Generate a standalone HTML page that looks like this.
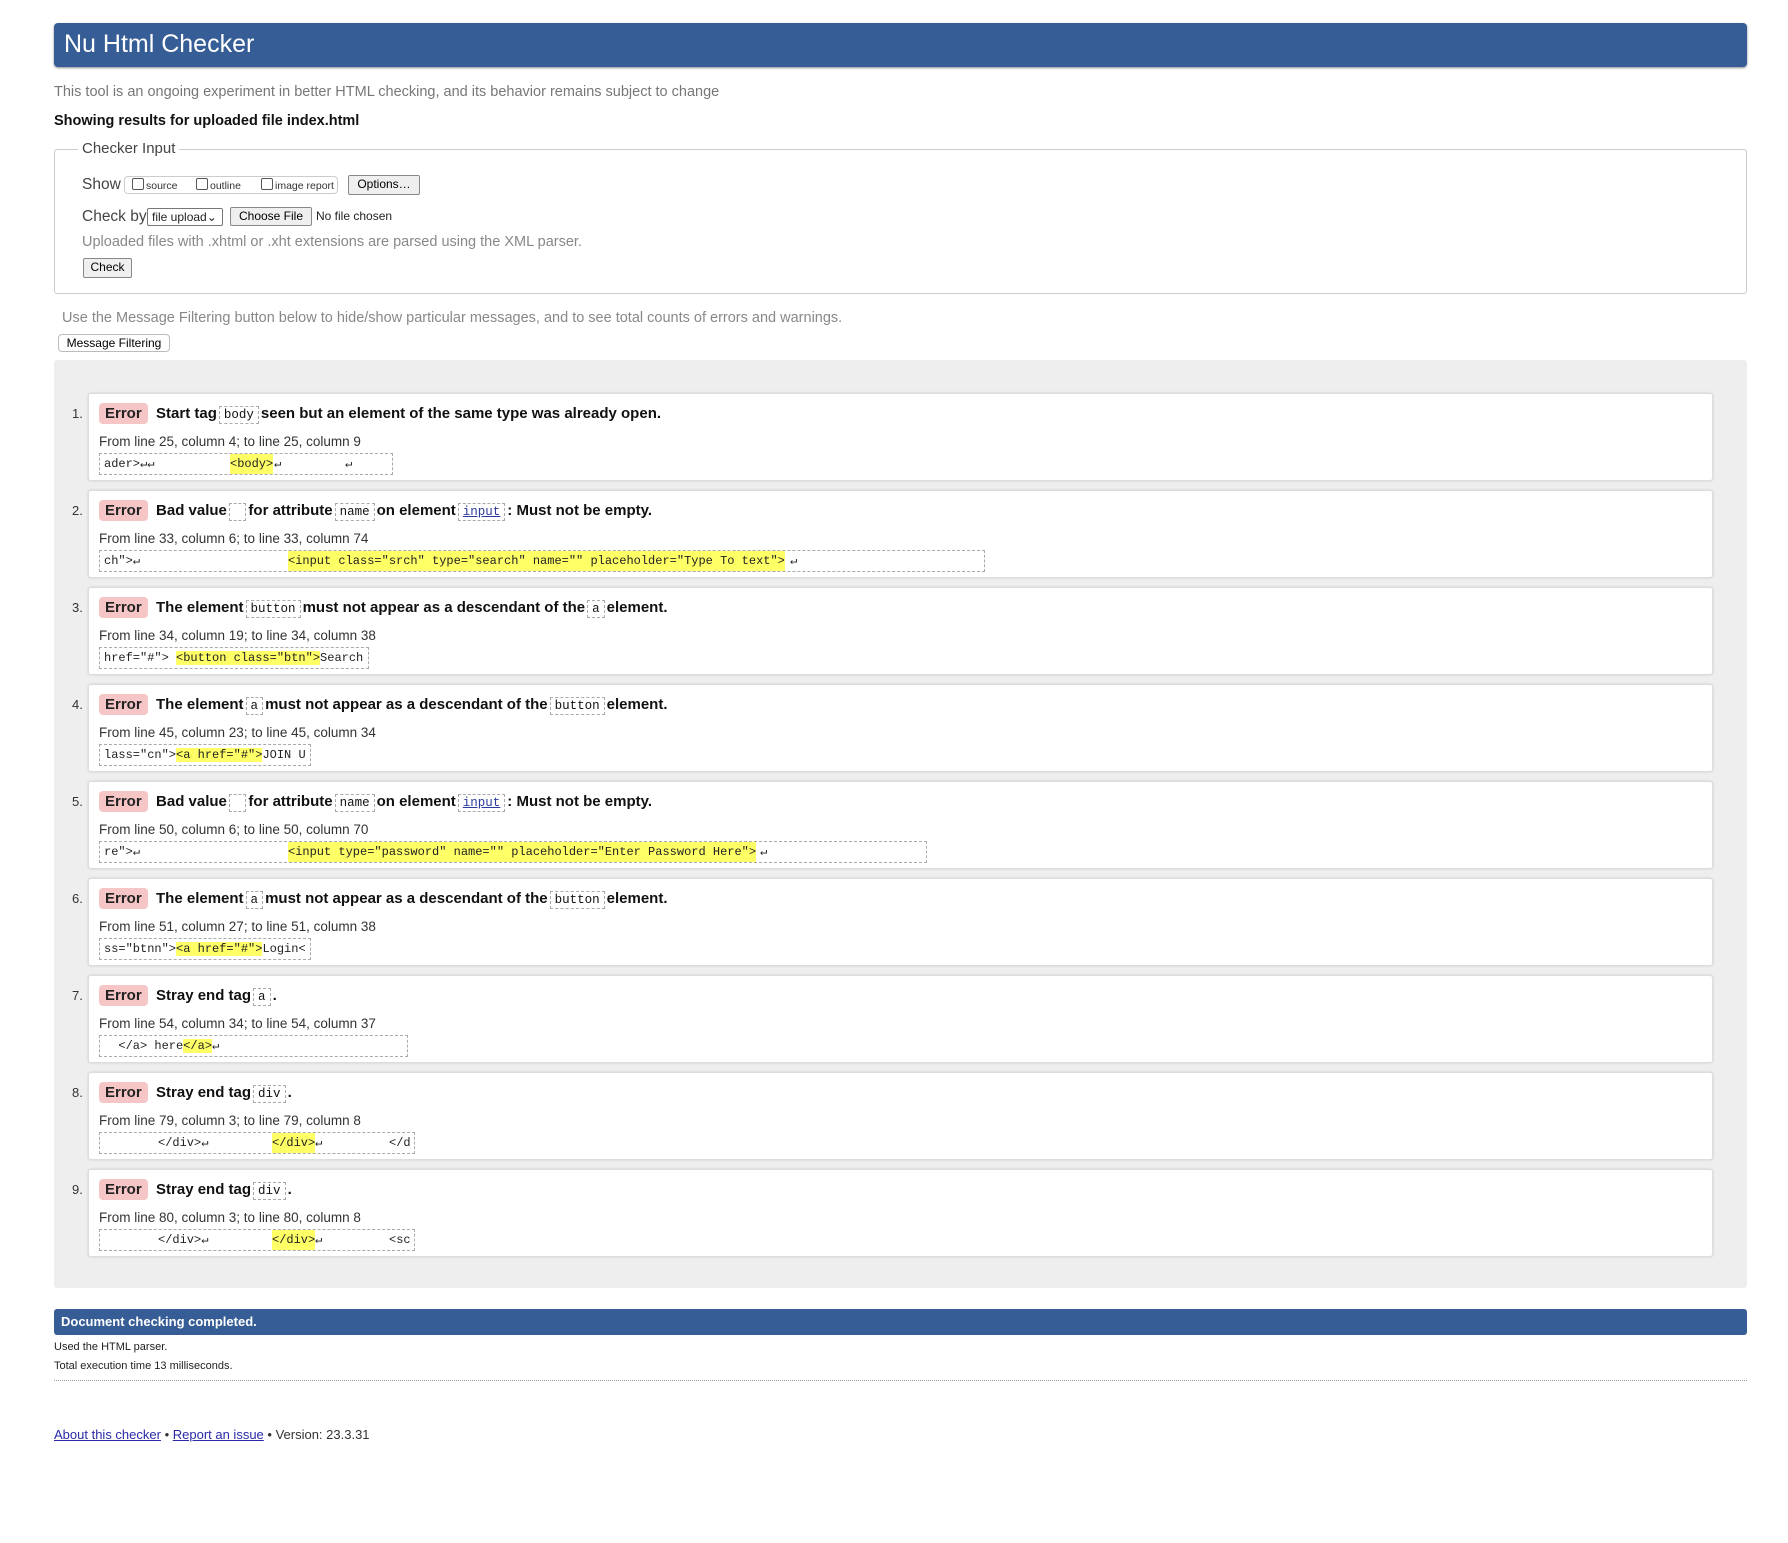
<!DOCTYPE html>
<html><head><meta charset="utf-8"><style>
*{box-sizing:border-box;margin:0;padding:0}
body{width:1788px;height:1543px;background:#fff;font-family:"Liberation Sans",Arial,sans-serif;color:#222;position:relative;overflow:hidden}
.a{position:absolute;white-space:nowrap}
.hdr{left:54px;top:23px;width:1693px;height:44px;background:#365d95;border-radius:4px;color:#fff;font-size:25px;padding:7px 10px;box-shadow:0 1px 2px #888}
.btn{border:1px solid #888;border-radius:2px;background:#efefef;font-size:12px;text-align:center;line-height:17px;color:#000}
.gray{left:54px;top:360px;width:1693px;height:928px;background:#eee;border-radius:3px}
.item{left:88px;width:1625px;height:88px;background:#fff;border:1px solid #ddd;border-radius:3px;box-shadow:0 0 2px #ccc}
.num{font-size:13px;color:#333}
.err{background:#f6c6c6;border-radius:4px;font-weight:bold;font-size:15px;padding:2px 6px;color:#222}
.h{font-weight:bold;font-size:15px;color:#111}
.c{font-family:"Liberation Mono",monospace;font-weight:normal;font-size:12.5px;border:1px dashed #aaa;padding:1px 4px;margin:0 2px}
.c.l{color:#2a3a9e;text-decoration:underline}
.loc{font-size:13.5px;color:#333}
.code{height:22px;border:1px dashed #aaa;font-family:"Liberation Mono",monospace;font-size:12px;line-height:20px;padding-left:4px}
.hl{background:#ff6;}
.code span{position:absolute;top:0}
</style></head><body>
<div class="a hdr">Nu Html Checker</div>
<div class="a" style="left:54px;top:84px;font-size:14.5px;color:#777">This tool is an ongoing experiment in better HTML checking, and its behavior remains subject to change</div>
<div class="a" style="left:54px;top:113px;font-size:14.5px;font-weight:bold;color:#111">Showing results for uploaded file index.html</div>
<div class="a" style="left:54px;top:149px;width:1693px;height:145px;border:1px solid #ccc;border-radius:3px"></div>
<div class="a" style="left:78px;top:140px;background:#fff;padding:0 4px;font-size:15px;color:#444">Checker Input</div>
<div class="a" style="left:82px;top:176px;font-size:15.5px;color:#444">Show</div>
<div class="a" style="left:124px;top:176px;width:214px;height:18px;border:1px solid #ccc;border-radius:4px;font-size:10.5px;color:#333;line-height:16px">
<span class="a" style="left:7px;top:1px;width:12px;height:12px;border:1px solid #555;border-radius:2px"></span><span class="a" style="left:21px;top:1px">source</span>
<span class="a" style="left:71px;top:1px;width:12px;height:12px;border:1px solid #555;border-radius:2px"></span><span class="a" style="left:85px;top:1px">outline</span>
<span class="a" style="left:136px;top:1px;width:12px;height:12px;border:1px solid #555;border-radius:2px"></span><span class="a" style="left:150px;top:1px">image report</span></div>
<div class="a btn" style="left:348px;top:175px;width:72px;height:20px">Options…</div>
<div class="a" style="left:82px;top:208px;font-size:15.5px;color:#444">Check by</div>
<div class="a" style="left:147px;top:208px;width:76px;height:18px;border:1px solid #777;border-radius:2px;font-size:12px;line-height:16px;padding-left:4px">file upload⌄</div>
<div class="a btn" style="left:230px;top:207px;width:82px;height:19px">Choose File</div>
<div class="a" style="left:316px;top:208px;font-size:12px;line-height:17px">No file chosen</div>
<div class="a" style="left:82px;top:234px;font-size:14.5px;color:#888">Uploaded files with .xhtml or .xht extensions are parsed using the XML parser.</div>
<div class="a btn" style="left:83px;top:258px;width:49px;height:20px">Check</div>
<div class="a" style="left:62px;top:310px;font-size:14.5px;color:#888">Use the Message Filtering button below to hide/show particular messages, and to see total counts of errors and warnings.</div>
<div class="a btn" style="left:58px;top:334px;width:112px;height:18px;border-color:#bbb;border-radius:4px;background:#fff">Message Filtering</div>
<div class="a gray"></div>

<div class="a item" style="top:393px"></div>
<div class="a item" style="top:490px"></div>
<div class="a item" style="top:587px"></div>
<div class="a item" style="top:684px"></div>
<div class="a item" style="top:781px"></div>
<div class="a item" style="top:878px"></div>
<div class="a item" style="top:975px"></div>
<div class="a item" style="top:1072px"></div>
<div class="a item" style="top:1169px"></div>

<div class="a num" style="left:72px;top:406px">1.</div>
<div class="a h" style="left:99px;top:405px"><span class="err">Error</span>&nbsp; Start tag<span class="c">body</span>seen but an element of the same type was already open.</div>
<div class="a loc" style="left:99px;top:434px">From line 25, column 4; to line 25, column 9</div>
<div class="a code" style="left:99px;top:453px;width:294px"><span style="left:4px">ader>↵↵</span><span class="hl" style="left:130px">&lt;body&gt;</span><span style="left:174px">↵</span><span style="left:245px">↵</span></div>

<div class="a num" style="left:72px;top:503px">2.</div>
<div class="a h" style="left:99px;top:502px"><span class="err">Error</span>&nbsp; Bad value<span class="c">&nbsp;</span>for attribute<span class="c">name</span>on element<span class="c l">input</span>: Must not be empty.</div>
<div class="a loc" style="left:99px;top:531px">From line 33, column 6; to line 33, column 74</div>
<div class="a code" style="left:99px;top:550px;width:886px"><span style="left:4px">ch"&gt;↵</span><span class="hl" style="left:188px">&lt;input class="srch" type="search" name="" placeholder="Type To text"&gt;</span><span style="left:690px">↵</span></div>

<div class="a num" style="left:72px;top:600px">3.</div>
<div class="a h" style="left:99px;top:599px"><span class="err">Error</span>&nbsp; The element<span class="c">button</span>must not appear as a descendant of the<span class="c">a</span>element.</div>
<div class="a loc" style="left:99px;top:628px">From line 34, column 19; to line 34, column 38</div>
<div class="a code" style="left:99px;top:647px;width:270px">href="#"&gt; <span class="hl" style="position:static">&lt;button class="btn"&gt;</span>Search</div>

<div class="a num" style="left:72px;top:697px">4.</div>
<div class="a h" style="left:99px;top:696px"><span class="err">Error</span>&nbsp; The element<span class="c">a</span>must not appear as a descendant of the<span class="c">button</span>element.</div>
<div class="a loc" style="left:99px;top:725px">From line 45, column 23; to line 45, column 34</div>
<div class="a code" style="left:99px;top:744px;width:212px">lass="cn"&gt;<span class="hl" style="position:static">&lt;a href="#"&gt;</span>JOIN U</div>

<div class="a num" style="left:72px;top:794px">5.</div>
<div class="a h" style="left:99px;top:793px"><span class="err">Error</span>&nbsp; Bad value<span class="c">&nbsp;</span>for attribute<span class="c">name</span>on element<span class="c l">input</span>: Must not be empty.</div>
<div class="a loc" style="left:99px;top:822px">From line 50, column 6; to line 50, column 70</div>
<div class="a code" style="left:99px;top:841px;width:828px"><span style="left:4px">re"&gt;↵</span><span class="hl" style="left:188px">&lt;input type="password" name="" placeholder="Enter Password Here"&gt;</span><span style="left:660px">↵</span></div>

<div class="a num" style="left:72px;top:891px">6.</div>
<div class="a h" style="left:99px;top:890px"><span class="err">Error</span>&nbsp; The element<span class="c">a</span>must not appear as a descendant of the<span class="c">button</span>element.</div>
<div class="a loc" style="left:99px;top:919px">From line 51, column 27; to line 51, column 38</div>
<div class="a code" style="left:99px;top:938px;width:212px">ss="btnn"&gt;<span class="hl" style="position:static">&lt;a href="#"&gt;</span>Login&lt;</div>

<div class="a num" style="left:72px;top:988px">7.</div>
<div class="a h" style="left:99px;top:987px"><span class="err">Error</span>&nbsp; Stray end tag<span class="c">a</span>.</div>
<div class="a loc" style="left:99px;top:1016px">From line 54, column 34; to line 54, column 37</div>
<div class="a code" style="left:99px;top:1035px;width:309px">&nbsp; &lt;/a&gt; here<span class="hl" style="position:static">&lt;/a&gt;</span>↵</div>

<div class="a num" style="left:72px;top:1085px">8.</div>
<div class="a h" style="left:99px;top:1084px"><span class="err">Error</span>&nbsp; Stray end tag<span class="c">div</span>.</div>
<div class="a loc" style="left:99px;top:1113px">From line 79, column 3; to line 79, column 8</div>
<div class="a code" style="left:99px;top:1132px;width:316px"><span style="left:58px">&lt;/div&gt;↵</span><span class="hl" style="left:172px">&lt;/div&gt;</span><span style="left:215px">↵</span><span style="left:289px">&lt;/d</span></div>

<div class="a num" style="left:72px;top:1182px">9.</div>
<div class="a h" style="left:99px;top:1181px"><span class="err">Error</span>&nbsp; Stray end tag<span class="c">div</span>.</div>
<div class="a loc" style="left:99px;top:1210px">From line 80, column 3; to line 80, column 8</div>
<div class="a code" style="left:99px;top:1229px;width:316px"><span style="left:58px">&lt;/div&gt;↵</span><span class="hl" style="left:172px">&lt;/div&gt;</span><span style="left:215px">↵</span><span style="left:289px">&lt;sc</span></div>

<div class="a" style="left:54px;top:1309px;width:1693px;height:26px;background:#365d95;border-radius:3px;color:#fff;font-weight:bold;font-size:13px;padding:5px 7px">Document checking completed.</div>
<div class="a" style="left:54px;top:1341px;font-size:11px;color:#222">Used the HTML parser.</div>
<div class="a" style="left:54px;top:1360px;font-size:11px;color:#222">Total execution time 13 milliseconds.</div>
<div class="a" style="left:54px;top:1380px;width:1693px;border-top:1px dotted #999"></div>
<div class="a" style="left:54px;top:1427px;font-size:13px;color:#333"><span style="color:#2a2aa8;text-decoration:underline">About this checker</span> • <span style="color:#2a2aa8;text-decoration:underline">Report an issue</span> • Version: 23.3.31</div>
</body></html>
